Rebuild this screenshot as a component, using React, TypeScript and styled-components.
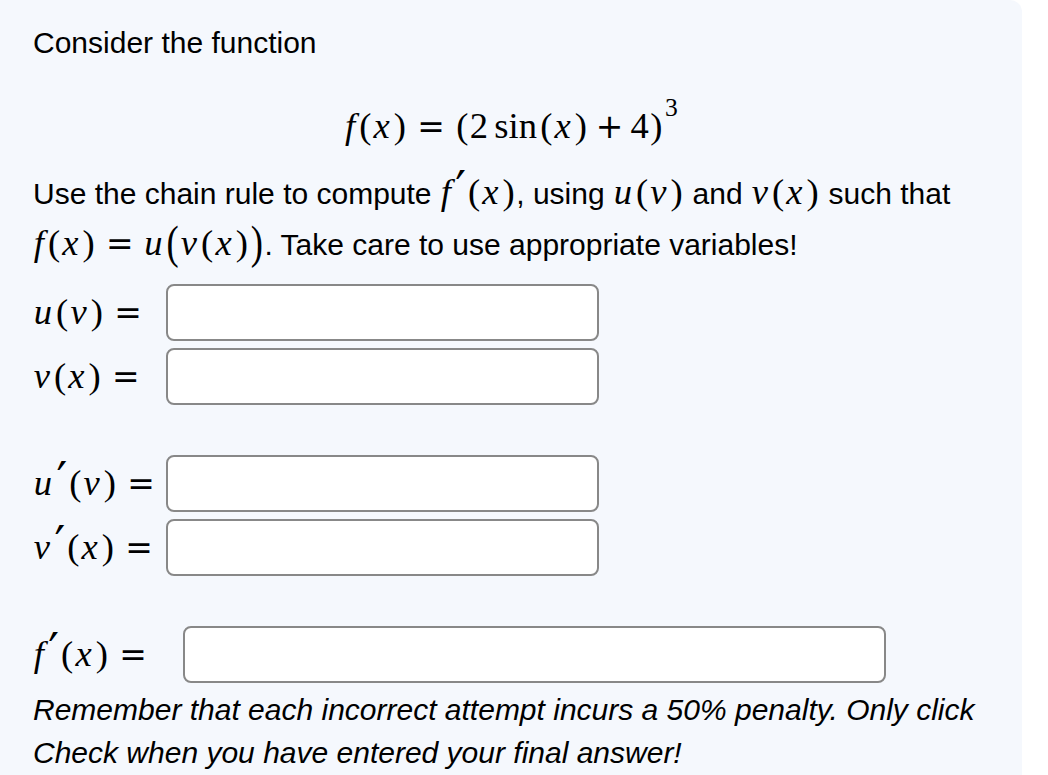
import React from "react";
import styled, { createGlobalStyle } from "styled-components";

const GlobalStyle = createGlobalStyle`
  html, body {
    margin: 0;
    padding: 0;
    background: #ffffff;
  }
  body {
    font-family: "Liberation Sans", Arial, Helvetica, sans-serif;
    color: #000;
  }
`;

const Panel = styled.div`
  width: 1022px;
  min-height: 775px;
  box-sizing: border-box;
  background: #f5f8fd;
  border-top-right-radius: 12px;
  padding: 22px 33px 0 33px;
  font-size: 30px;
  line-height: 42px;
`;

const Para = styled.p<{ $lh?: number; $mt?: number }>`
  margin: ${(p) => p.$mt ?? 0}px 0 0 0;
  line-height: ${(p) => p.$lh ?? 42}px;
`;

const Note = styled.p`
  margin: 5px 0 0 0;
  font-style: italic;
  line-height: 43px;
`;

const M = styled.span`
  font-family: "Liberation Serif", "Times New Roman", serif;
  font-size: 1.22em;
  font-style: normal;
  white-space: nowrap;
`;

const V = styled.span`
  font-style: italic;
  padding: 0 0.07em 0 0.02em;
`;

const Rel = styled.span`
  font-family: "DejaVu Sans", sans-serif;
  font-size: 0.9em;
  margin: 0 0.3em;
`;

const Bin = styled.span`
  font-family: "DejaVu Sans", sans-serif;
  font-size: 0.9em;
  margin: 0 0.22em;
`;

const Op = styled.span`
  margin: 0 0.05em 0 0.1667em;
`;

const Paren = styled.span<{ $big?: boolean }>`
  display: inline-block;
  transform: ${(p) => (p.$big ? "scaleY(1.25)" : "none")};
  padding: 0 0.04em;
`;

const Prime = styled.span`
  font-family: "DejaVu Sans", sans-serif;
  font-style: normal;
  font-size: 1.3em;
  vertical-align: -0.02em;
  line-height: 0;
  margin: 0 0.01em 0 0.04em;
`;

const Sup = styled.span`
  font-size: 0.7em;
  vertical-align: 0.85em;
  line-height: 0;
  margin-left: 0.04em;
`;

const DisplayEq = styled.div`
  margin-top: 41px;
  text-align: center;
  line-height: 42px;
`;

const Group = styled.div<{ $label: number; $box: number; $mt: number }>`
  display: grid;
  grid-template-columns: ${(p) => p.$label}px ${(p) => p.$box}px;
  row-gap: 7px;
  align-items: center;
  margin-top: ${(p) => p.$mt}px;
`;

const Label = styled.div`
  line-height: 1;
  white-space: nowrap;
`;

const AnswerBox = styled.input`
  box-sizing: border-box;
  width: 100%;
  height: 57px;
  margin: 0;
  border: 2px solid #888888;
  border-radius: 8px;
  background: #ffffff;
  outline: none;
`;

const Fn = ({ f, arg, prime }: { f: string; arg: string; prime?: boolean }) => (
  <>
    <V>{f}</V>
    {prime && <Prime>′</Prime>}
    <Paren>(</Paren>
    <V>{arg}</V>
    <Paren>)</Paren>
  </>
);

const Row = ({ f, arg, prime }: { f: string; arg: string; prime?: boolean }) => (
  <>
    <Label>
      <M>
        <Fn f={f} arg={arg} prime={prime} />
        <Rel>=</Rel>
      </M>
    </Label>
    <AnswerBox type="text" />
  </>
);

export default function App() {
  return (
    <>
      <GlobalStyle />
      <Panel>
        <Para>Consider the function</Para>
        <DisplayEq>
          <M>
            <Fn f="f" arg="x" />
            <Rel>=</Rel>
            <Paren>(</Paren>2<Op>sin</Op>
            <Paren>(</Paren>
            <V>x</V>
            <Paren>)</Paren>
            <Bin>+</Bin>4<Paren>)</Paren>
            <Sup>3</Sup>
          </M>
        </DisplayEq>
        <Para $lh={49} $mt={18}>
          Use the chain rule to compute{" "}
          <M>
            <Fn f="f" arg="x" prime />
          </M>
          , using{" "}
          <M>
            <Fn f="u" arg="v" />
          </M>{" "}
          and{" "}
          <M>
            <Fn f="v" arg="x" />
          </M>{" "}
          such that
          <br />
          <M>
            <Fn f="f" arg="x" />
            <Rel>=</Rel>
            <V>u</V>
            <Paren $big>(</Paren>
            <V>v</V>
            <Paren>(</Paren>
            <V>x</V>
            <Paren>)</Paren>
            <Paren $big>)</Paren>
          </M>
          . Take care to use appropriate variables!
        </Para>
        <Group $label={133} $box={433} $mt={15}>
          <Row f="u" arg="v" />
          <Row f="v" arg="x" />
        </Group>
        <Group $label={133} $box={433} $mt={50}>
          <Row f="u" arg="v" prime />
          <Row f="v" arg="x" prime />
        </Group>
        <Group $label={150} $box={703} $mt={50}>
          <Row f="f" arg="x" prime />
        </Group>
        <Note>
          Remember that each incorrect attempt incurs a 50% penalty. Only click
          <br />
          Check when you have entered your final answer!
        </Note>
      </Panel>
    </>
  );
}
